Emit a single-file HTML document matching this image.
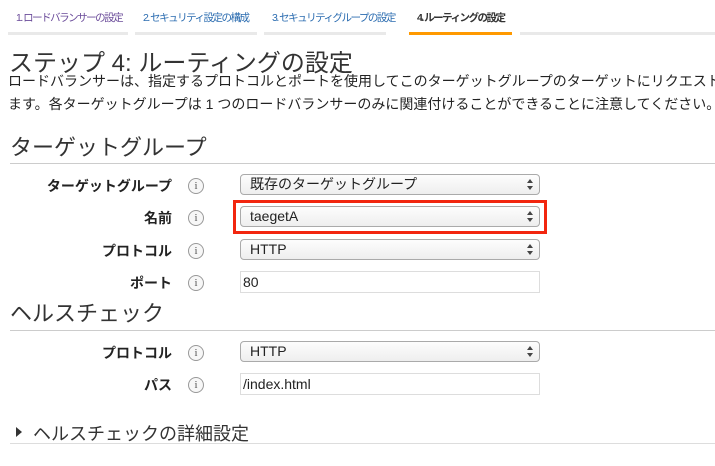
<!DOCTYPE html>
<html><head><meta charset="utf-8"><style>
*{margin:0;padding:0;box-sizing:border-box}
body{width:715px;height:466px;background:#fff;position:relative;overflow:hidden;font-family:"Liberation Sans","Noto Sans CJK JP",sans-serif;color:#333}
.a{position:absolute;white-space:nowrap}
.tab{position:absolute;top:10px;font-size:10.5px;letter-spacing:-1.5px;color:#2b6cb0;height:25px;border-bottom:3px solid #e9e9e9;padding-left:8px;white-space:nowrap}
.lbl{position:absolute;font-size:14px;font-weight:bold;color:#222;text-align:right;width:172px;left:0}
.info{position:absolute;left:188px;width:16px;height:16px;border:1px solid #999;border-radius:50%;font-size:11px;color:#555;text-align:center;line-height:14px;font-family:"Liberation Serif",serif;background:#f7f7f7}
.sel{position:absolute;left:240px;width:300px;height:21px;border:1px solid #aaa;border-radius:4px;background:linear-gradient(#fdfdfd,#eee);font-size:14px;padding-left:9px;line-height:19px;color:#222}
.sel:after{content:"";position:absolute;right:6px;top:4px;width:0;height:0;border-left:3px solid transparent;border-right:3px solid transparent;border-bottom:4px solid #444;}
.sel:before{content:"";position:absolute;right:6px;top:11px;width:0;height:0;border-left:3px solid transparent;border-right:3px solid transparent;border-top:4px solid #444;}
.inp{position:absolute;left:240px;width:300px;height:22px;border:1px solid #ddd;font-size:14px;padding-left:2px;line-height:20px;color:#222}
.h2{position:absolute;left:10px;font-size:22px;color:#333}
.hr{position:absolute;left:10px;right:0;height:1px;background:#ccc}
</style></head><body>
<div class="tab" style="left:8px;width:120px;color:#6b4c9a;padding-left:8px">1. ロードバランサーの設定</div>
<div class="tab" style="left:135px;width:122px;padding-left:8px">2. セキュリティ設定の構成</div>
<div class="tab" style="left:264px;width:122px;padding-left:8px">3. セキュリティグループの設定</div>
<div class="tab" style="left:409px;width:103px;color:#333;font-weight:bold;border-bottom-color:#f90;padding-left:8px">4. ルーティングの設定</div>
<div class="tab" style="left:520px;width:200px"></div>
<div class="a" style="left:9px;top:43px;font-size:24px;color:#333">ステップ 4: ルーティングの設定</div>
<div class="a" style="left:8px;top:70px;font-size:14px;line-height:23px;color:#222">ロードバランサーは、指定するプロトコルとポートを使用してこのターゲットグループのターゲットにリクエストを<br>ます。各ターゲットグループは 1 つのロードバランサーのみに関連付けることができることに注意してください。</div>
<div class="h2" style="top:130px">ターゲットグループ</div>
<div class="hr" style="top:163px"></div>
<div class="lbl" style="top:176px">ターゲットグループ</div><div class="info" style="top:178px">i</div>
<div class="sel" style="top:174px">既存のターゲットグループ</div>
<div class="lbl" style="top:208px">名前</div><div class="info" style="top:210px">i</div>
<div class="sel" style="top:206px">taegetA</div>
<div class="a" style="left:233px;top:200px;width:314px;height:34px;border:3px solid #f2260f"></div>
<div class="lbl" style="top:241px">プロトコル</div><div class="info" style="top:243px">i</div>
<div class="sel" style="top:239px">HTTP</div>
<div class="lbl" style="top:273px">ポート</div><div class="info" style="top:275px">i</div>
<div class="inp" style="top:271px">80</div>
<div class="h2" style="top:296px">ヘルスチェック</div>
<div class="hr" style="top:330px"></div>
<div class="lbl" style="top:343px">プロトコル</div><div class="info" style="top:345px">i</div>
<div class="sel" style="top:341px">HTTP</div>
<div class="lbl" style="top:375px">パス</div><div class="info" style="top:377px">i</div>
<div class="inp" style="top:373px">/index.html</div>
<div class="a" style="left:16px;top:427px;width:0;height:0;border-top:5px solid transparent;border-bottom:5px solid transparent;border-left:6px solid #333"></div>
<div class="a" style="left:33px;top:420px;font-size:18px;color:#333">ヘルスチェックの詳細設定</div>
<div class="hr" style="top:443px;background:#ddd"></div>
</body></html>
